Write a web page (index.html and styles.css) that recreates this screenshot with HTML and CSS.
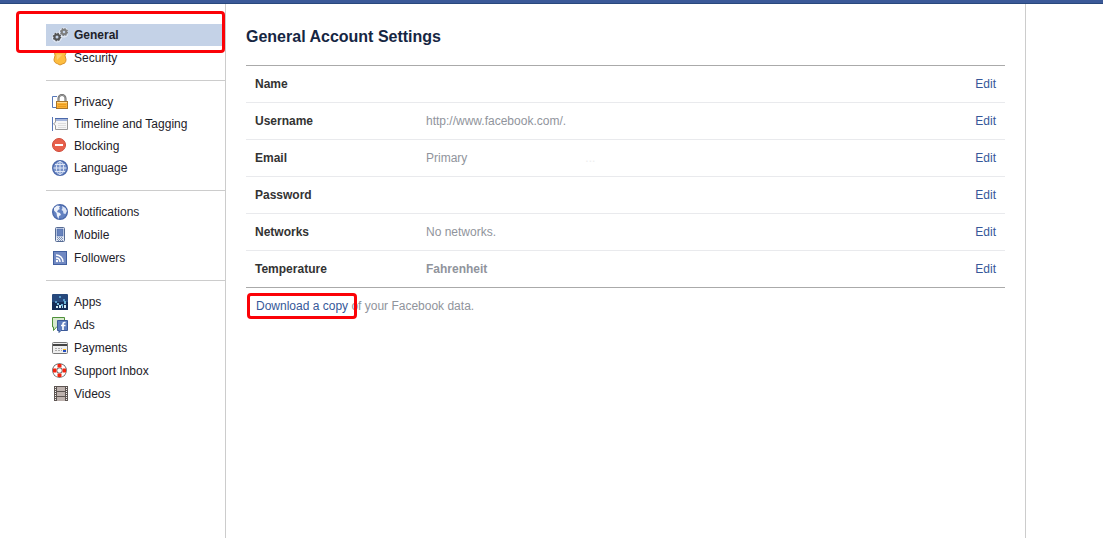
FILE: index.html
```html
<!DOCTYPE html>
<html lang="en">
<head>
    <meta charset="UTF-8">
    <meta name="viewport" content="width=device-width, initial-scale=1.0">
    <title>General Account Settings</title>
    <link rel="stylesheet" href="styles.css">
</head>
<body>
    <header class="topbar"></header>

    <div class="page">
        <!-- Left menu -->
        <nav class="sidebar">
            <ul class="menu">
                <li class="marked">
                    <a href="#" class="item active">
                        <svg class="icon" viewBox="0 0 16 16">
                            <g fill="none" stroke="#fff" opacity=".7"><circle cx="5" cy="10.500" r="4.500"/><circle cx="12" cy="5.500" r="4.500"/></g>
                            <circle cx="5" cy="10" r="2.500" fill="none" stroke="#555" stroke-width="2"/>
                            <circle cx="5" cy="10" r="3.600" fill="none" stroke="#555" stroke-width="1.400" stroke-dasharray="1.400 1.427"/>
                            <circle cx="12" cy="5" r="2.300" fill="none" stroke="#7d7d7d" stroke-width="2"/>
                            <circle cx="12" cy="5" r="3.400" fill="none" stroke="#7d7d7d" stroke-width="1.400" stroke-dasharray="1.300 1.370"/>
                        </svg>
                        General
                    </a>
                </li>
                <li>
                    <a href="#" class="item">
                        <svg class="icon" viewBox="0 0 16 16">
                            <path d="M2.500 2.500 4 1.500l2 1 2-1 2 1 2-1 2 1.500-1 2.500 1 4c0 3-1.500 4-3 4.200L8 15l-2.500-1.300C4 13.500 1.800 12 2 9.500l1-4z" fill="#fdbd3f" stroke="#d9922b"/>
                            <path d="M4.500 4.500h6L5 10z" fill="#ffd070"/>
                        </svg>
                        Security
                    </a>
                </li>
            </ul>
            <ul class="menu compact">
                <li>
                    <a href="#" class="item">
                        <svg class="icon" viewBox="0 0 16 16">
                            <path d="M5 2.500H.5v11H5" fill="#fff" stroke="#5878b8"/>
                            <path d="M6.500 8V4.500a3.500 3.500 0 0 1 7 0V8" fill="none" stroke="#666" stroke-width="2"/>
                            <path d="M6.500 8V4.500a3.500 3.500 0 0 1 7 0V8" fill="none" stroke="#bbb" stroke-width=".6"/>
                            <rect x="4.500" y="7.500" width="11" height="7" fill="#fbb034" stroke="#a9752b"/>
                            <path d="M5 8.500h10" stroke="#ffd98c"/>
                            <path d="M6 10.500h8M6 12.500h8" stroke="#e99c20"/>
                        </svg>
                        Privacy
                    </a>
                </li>
                <li>
                    <a href="#" class="item">
                        <svg class="icon" viewBox="0 0 16 16">
                            <path d="M.5 1v14" stroke="#5878b8"/>
                            <path d="M3.500 2.500h12v11h-12v-4L1.500 8l2-2z" fill="#f6f6f6" stroke="#999"/>
                            <path d="M3 2.500h13" stroke="#4b69ac"/>
                            <path d="M4 4h11" stroke="#a4b5dc" stroke-width="2"/>
                            <path d="M6 7.500h8M6 9.500h8M6 11.500h8" stroke="#ddd"/>
                        </svg>
                        Timeline and Tagging
                    </a>
                </li>
                <li>
                    <a href="#" class="item">
                        <svg class="icon" viewBox="0 0 16 16">
                            <circle cx="7" cy="7" r="6.500" fill="#e8604c" stroke="#cf4a38"/>
                            <rect x="3" y="6" width="8" height="2" fill="#fff"/>
                        </svg>
                        Blocking
                    </a>
                </li>
                <li>
                    <a href="#" class="item">
                        <svg class="icon" viewBox="0 0 16 16">
                            <circle cx="8" cy="8" r="7.300" fill="#7892c9" stroke="#4a68ab" stroke-width="1.400"/>
                            <g fill="none" stroke="#dfe7f6"><path d="M8 1.500v13M1.500 8h13M3 4.500h10M3 11.500h10"/><ellipse cx="8" cy="8" rx="3.700" ry="6.500"/></g>
                        </svg>
                        Language
                    </a>
                </li>
            </ul>
            <ul class="menu">
                <li>
                    <a href="#" class="item">
                        <svg class="icon" viewBox="0 0 16 16">
                            <circle cx="8" cy="8" r="7.300" fill="#6482c1" stroke="#4a68ab" stroke-width="1.400"/>
                            <path d="M2 4l3-2.500 3 .5-1 2 1 1-2 1-1 2 3 1 1 2-2 1-.5 3L5 12l-.5-3L2 6.500z" fill="#edf2fb"/>
                            <path d="M10 2l3.500 2L15 7l-1.500 3-2-.5L11 7 9.500 6l1-2z" fill="#dce5f6"/>
                        </svg>
                        Notifications
                    </a>
                </li>
                <li>
                    <a href="#" class="item">
                        <svg class="icon" viewBox="0 0 16 16">
                            <rect x="3.500" y=".5" width="9" height="14" rx="1" fill="#e4eaf5" stroke="#566b94"/>
                            <rect x="5" y="2" width="6" height="7" fill="#6883bd" stroke="#4868a8" stroke-width=".6"/>
                            <path d="M5 10.500h6M6 11.500h6M5 12.500h6M6 13.500h6" stroke="#8496b8" stroke-dasharray="1 1"/>
                        </svg>
                        Mobile
                    </a>
                </li>
                <li>
                    <a href="#" class="item">
                        <svg class="icon" viewBox="0 0 16 16">
                            <rect x="1.500" y="1.500" width="13" height="13" fill="#7189c2" stroke="#415f9f"/>
                            <path d="M4 5c4 0 7 3 7 7M4 8c2.500 0 4 1.500 4 4" fill="none" stroke="#fff" stroke-width="1.500"/>
                            <circle cx="5" cy="11" r="1.200" fill="#fff"/>
                        </svg>
                        Followers
                    </a>
                </li>
            </ul>
            <ul class="menu">
                <li>
                    <a href="#" class="item">
                        <svg class="icon" viewBox="0 0 16 16">
                            <rect width="16" height="16" rx="1" fill="#27497d"/>
                            <rect y="8" width="16" height="8" fill="#152d57"/>
                            <path d="M7 2h2v2H7zM3 7h2v2H3zM11 5h2v2h-2z" fill="#5698c8"/>
                            <path d="M5 9h2v2H5zM9 10h2v2H9zM12 7h2v3h-2z" fill="#6fb5d8"/>
                            <path d="M4 12h2v2H4zM7 11h2v3H7zM12 11h2v3h-2z" fill="#d3ebf4"/>
                            <path d="M10 12h1v2h-1z" fill="#a8dbed"/>
                        </svg>
                        Apps
                    </a>
                </li>
                <li>
                    <a href="#" class="item">
                        <svg class="icon" viewBox="0 0 16 16">
                            <path d="M.5.5h12v9H5l-3.500 4V10h-1z" fill="#d7e9ce" stroke="#4e9139"/>
                            <path d="M5.500 3.500h10v10H9l-2 2v-2H5.500z" fill="#5e7dbd" stroke="#3b5998"/>
                            <path d="M13.500 5.500h-1q-1.500 0-1.500 1.500v6M9 8.500h4.500" fill="none" stroke="#fff" stroke-width="1.700"/>
                        </svg>
                        Ads
                    </a>
                </li>
                <li>
                    <a href="#" class="item">
                        <svg class="icon" viewBox="0 0 16 16">
                            <rect x=".5" y="2.500" width="15" height="11" rx="1" fill="#eee" stroke="#777"/>
                            <rect x="1" y="4" width="14" height="2" fill="#444"/>
                            <path d="M3 8.500h7M3 10.500h7" stroke="#aaa" stroke-dasharray="2 1"/>
                            <path d="M11 9.500h3" stroke="#f6b521"/>
                            <path d="M11 11h3" stroke="#234ec1" stroke-width="2"/>
                        </svg>
                        Payments
                    </a>
                </li>
                <li>
                    <a href="#" class="item">
                        <svg class="icon" viewBox="0 0 16 16">
                            <circle cx="7.500" cy="7.500" r="4.800" fill="none" stroke="#555" stroke-width="5"/>
                            <circle cx="7.500" cy="7.500" r="4.800" fill="none" stroke="#fff" stroke-width="3.600"/>
                            <path d="M5.500 1h4v3.500h-4zM5.500 10.500h4V14h-4zM1 5.500h3.500v4H1zM10.500 5.500H14v4h-3.500z" fill="#f3230f"/>
                        </svg>
                        Support Inbox
                    </a>
                </li>
                <li>
                    <a href="#" class="item">
                        <svg class="icon" viewBox="0 0 16 16">
                            <rect x="2" width="14" height="15" fill="#5d5552"/>
                            <path d="M5 1h8v4H5zM5 6h8v4H5zM5 11h8v4H5z" fill="#bdb2ae"/>
                            <path d="M3.500 1v14M14.500 1v14" stroke="#f4f4f4" stroke-dasharray="1 1"/>
                        </svg>
                        Videos
                    </a>
                </li>
            </ul>
        </nav>

        <!-- Settings -->
        <main class="content">
            <h1>General Account Settings</h1>
            <table class="settings">
                <tr>
                    <th scope="row">Name</th>
                    <td></td>
                    <td class="edit"><a href="#">Edit</a></td>
                </tr>
                <tr>
                    <th scope="row">Username</th>
                    <td>http://www.facebook.com/.</td>
                    <td class="edit"><a href="#">Edit</a></td>
                </tr>
                <tr>
                    <th scope="row">Email</th>
                    <td>Primary<span class="faded">...</span></td>
                    <td class="edit"><a href="#">Edit</a></td>
                </tr>
                <tr>
                    <th scope="row">Password</th>
                    <td></td>
                    <td class="edit"><a href="#">Edit</a></td>
                </tr>
                <tr>
                    <th scope="row">Networks</th>
                    <td>No networks.</td>
                    <td class="edit"><a href="#">Edit</a></td>
                </tr>
                <tr>
                    <th scope="row">Temperature</th>
                    <td><strong>Fahrenheit</strong></td>
                    <td class="edit"><a href="#">Edit</a></td>
                </tr>
            </table>
            <p class="download"><a href="#" class="marked">Download a copy</a> of your Facebook data.</p>
        </main>
    </div>
</body>
</html>
```
FILE: styles.css
```css
* {
    box-sizing: border-box;
}
body {
    margin: 0;
    min-height: 100vh;
    display: flex;
    flex-direction: column;
    background: #fff;
    color: #1d2129;
    font-family: "Liberation Sans", Arial, sans-serif;
    font-size: 12px;
    line-height: 16px;
}
a {
    color: #365899;
    text-decoration: none;
}
a:hover {
    text-decoration: underline;
}

.topbar {
    height: 4px;
    background: #3b5998;
    border-bottom: 1px solid #29487d;
}
.page {
    flex: 1;
    display: flex;
    max-width: 1026px;
    padding-left: 46px;
    border-right: 1px solid #ccc;
}

/* Left menu */
.sidebar {
    width: 180px;
    padding-top: 10px;
    border-right: 1px solid #ccc;
}
.menu {
    display: flex;
    flex-direction: column;
    gap: 1px;
    margin: 0;
    padding: 10px 0 11px;
    list-style: none;
}
.menu + .menu {
    border-top: 1px solid #ccc;
}
.compact {
    gap: 0;
}
.item {
    display: flex;
    align-items: center;
    gap: 6px;
    height: 22px;
    padding-left: 6px;
    color: #1d2129;
}
.item.active {
    background: #c4d2e7;
    font-weight: bold;
}
.icon {
    width: 16px;
    height: 16px;
}

/* Settings */
.content {
    flex: 1;
    padding: 20px 20px 0;
}
h1 {
    margin: 0;
    padding: 3px 0 18px;
    color: #162643;
    font-size: 16px;
    line-height: 20px;
}
.settings {
    width: 100%;
    border-spacing: 0;
    border-top: 1px solid #aaa;
    border-bottom: 1px solid #aaa;
}
.settings th,
.settings td {
    height: 37px;
    padding: 0;
    border-bottom: 1px solid #e9eaed;
    color: #90949c;
    text-align: left;
}
.settings tr:last-child th,
.settings tr:last-child td {
    height: 36px;
    border-bottom: none;
}
.settings th {
    width: 180px;
    padding-left: 9px;
    color: #333;
}
.settings .edit {
    padding-right: 9px;
    text-align: right;
}
.faded {
    padding-left: 118px;
    color: #eee;
}
.download {
    margin: 0;
    padding: 10px;
    color: #90949c;
}

/* Red frames */
.marked {
    position: relative;
}
.marked::after {
    content: "";
    position: absolute;
    inset: -6px -9px;
    border: 3px solid #fb0207;
    border-radius: 4px;
    pointer-events: none;
}
.menu .marked::after {
    inset: -13px 0 -7px -30px;
    z-index: 1;
}
```
